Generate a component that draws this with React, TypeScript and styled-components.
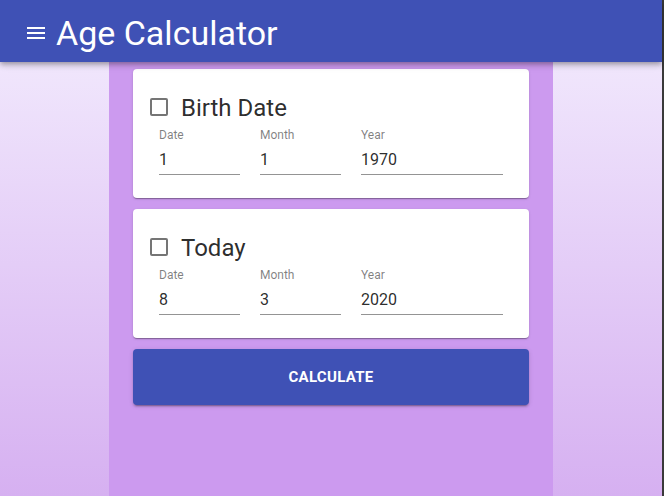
import React from "react";
import styled, { createGlobalStyle } from "styled-components";

const GlobalStyle = createGlobalStyle`
  html {
    background: #3a3a3a;
  }
  body {
    margin: 0;
    font-family: Roboto, "Liberation Sans", sans-serif;
  }
`;

const App = () => {
  const sections: any = [
    { title: "Birth Date", date: "1", month: "1", year: "1970" },
    { title: "Today", date: "8", month: "3", year: "2020" },
  ];
  return (
    <Page>
      <GlobalStyle />
      <AppBar>
        <MenuIcon viewBox="0 0 24 24">
          <path d="M3 18h18v-2H3v2zm0-5h18v-2H3v2zm0-7v2h18V6H3z" fill="#fff" />
        </MenuIcon>
        <Title>Age Calculator</Title>
      </AppBar>
      <Main>
        <Column>
          {sections.map((el: any) => (
            <Card key={el.title}>
              <Header>
                <CheckBox />
                <HeaderText>{el.title}</HeaderText>
              </Header>
              <Fields>
                <Field $width={81}>
                  <Label>Date</Label>
                  <Value>{el.date}</Value>
                </Field>
                <Field $width={81}>
                  <Label>Month</Label>
                  <Value>{el.month}</Value>
                </Field>
                <Field $width={142}>
                  <Label>Year</Label>
                  <Value>{el.year}</Value>
                </Field>
              </Fields>
            </Card>
          ))}
          <Button>CALCULATE</Button>
        </Column>
      </Main>
    </Page>
  );
};

export default App;

const Page = styled.div`
  width: calc(100% - 2px);
  min-height: 100vh;
  background: linear-gradient(#f4eefe, #d6b0f1);
  display: flex;
  flex-direction: column;
`;

const AppBar = styled.div`
  height: 62px;
  background-color: #3f51b5;
  display: flex;
  align-items: center;
  padding-left: 24px;
  gap: 8px;
  position: relative;
  z-index: 1;
  box-shadow: 0px 2px 4px -1px rgba(0, 0, 0, 0.2),
    0px 4px 5px 0px rgba(0, 0, 0, 0.14), 0px 1px 10px 0px rgba(0, 0, 0, 0.12);
`;

const MenuIcon = styled.svg`
  width: 24px;
  height: 24px;
  margin-top: 4px;
`;

const Title = styled.div`
  font-size: 34px;
  color: white;
  font-weight: 400;
  margin-top: 4px;
`;

const Main = styled.div`
  flex: 1;
  display: flex;
  justify-content: center;
`;

const Column = styled.div`
  width: 444px;
  box-sizing: border-box;
  background-color: #cc9aef;
  padding: 7px 24px;
  display: flex;
  flex-direction: column;
  gap: 11px;
`;

const Card = styled.div`
  background-color: white;
  border-radius: 4px;
  height: 129px;
  box-sizing: border-box;
  padding: 23px 26px 0 17px;
  box-shadow: 0px 2px 1px -1px rgba(0, 0, 0, 0.2),
    0px 1px 1px 0px rgba(0, 0, 0, 0.14), 0px 1px 3px 0px rgba(0, 0, 0, 0.12);
`;

const Header = styled.div`
  height: 30px;
  display: flex;
  align-items: center;
  gap: 13px;
`;

const CheckBox = styled.div`
  width: 14px;
  height: 14px;
  border: 2px solid #757575;
  border-radius: 2px;
`;

const HeaderText = styled.div`
  font-size: 24px;
  color: rgba(0, 0, 0, 0.84);
  margin-top: 2px;
`;

const Fields = styled.div`
  display: flex;
  gap: 20px;
  margin-left: 9px;
  margin-top: 6px;
`;

const Field = styled.div<{ $width: number }>`
  width: ${(p) => p.$width}px;
  display: flex;
  flex-direction: column;
`;

const Label = styled.div`
  font-size: 12px;
  line-height: 14px;
  color: rgba(0, 0, 0, 0.5);
`;

const Value = styled.div`
  font-size: 16px;
  line-height: 19px;
  padding: 8px 0 5px;
  color: rgba(0, 0, 0, 0.84);
  border-bottom: 1px solid rgba(0, 0, 0, 0.42);
`;

const Button = styled.div`
  height: 56px;
  border-radius: 4px;
  background-color: #3f51b5;
  color: white;
  font-size: 15px;
  font-weight: 700;
  letter-spacing: 0.3px;
  display: flex;
  justify-content: center;
  align-items: center;
  box-shadow: 0px 3px 1px -2px rgba(0, 0, 0, 0.2),
    0px 2px 2px 0px rgba(0, 0, 0, 0.14), 0px 1px 5px 0px rgba(0, 0, 0, 0.12);
`;
